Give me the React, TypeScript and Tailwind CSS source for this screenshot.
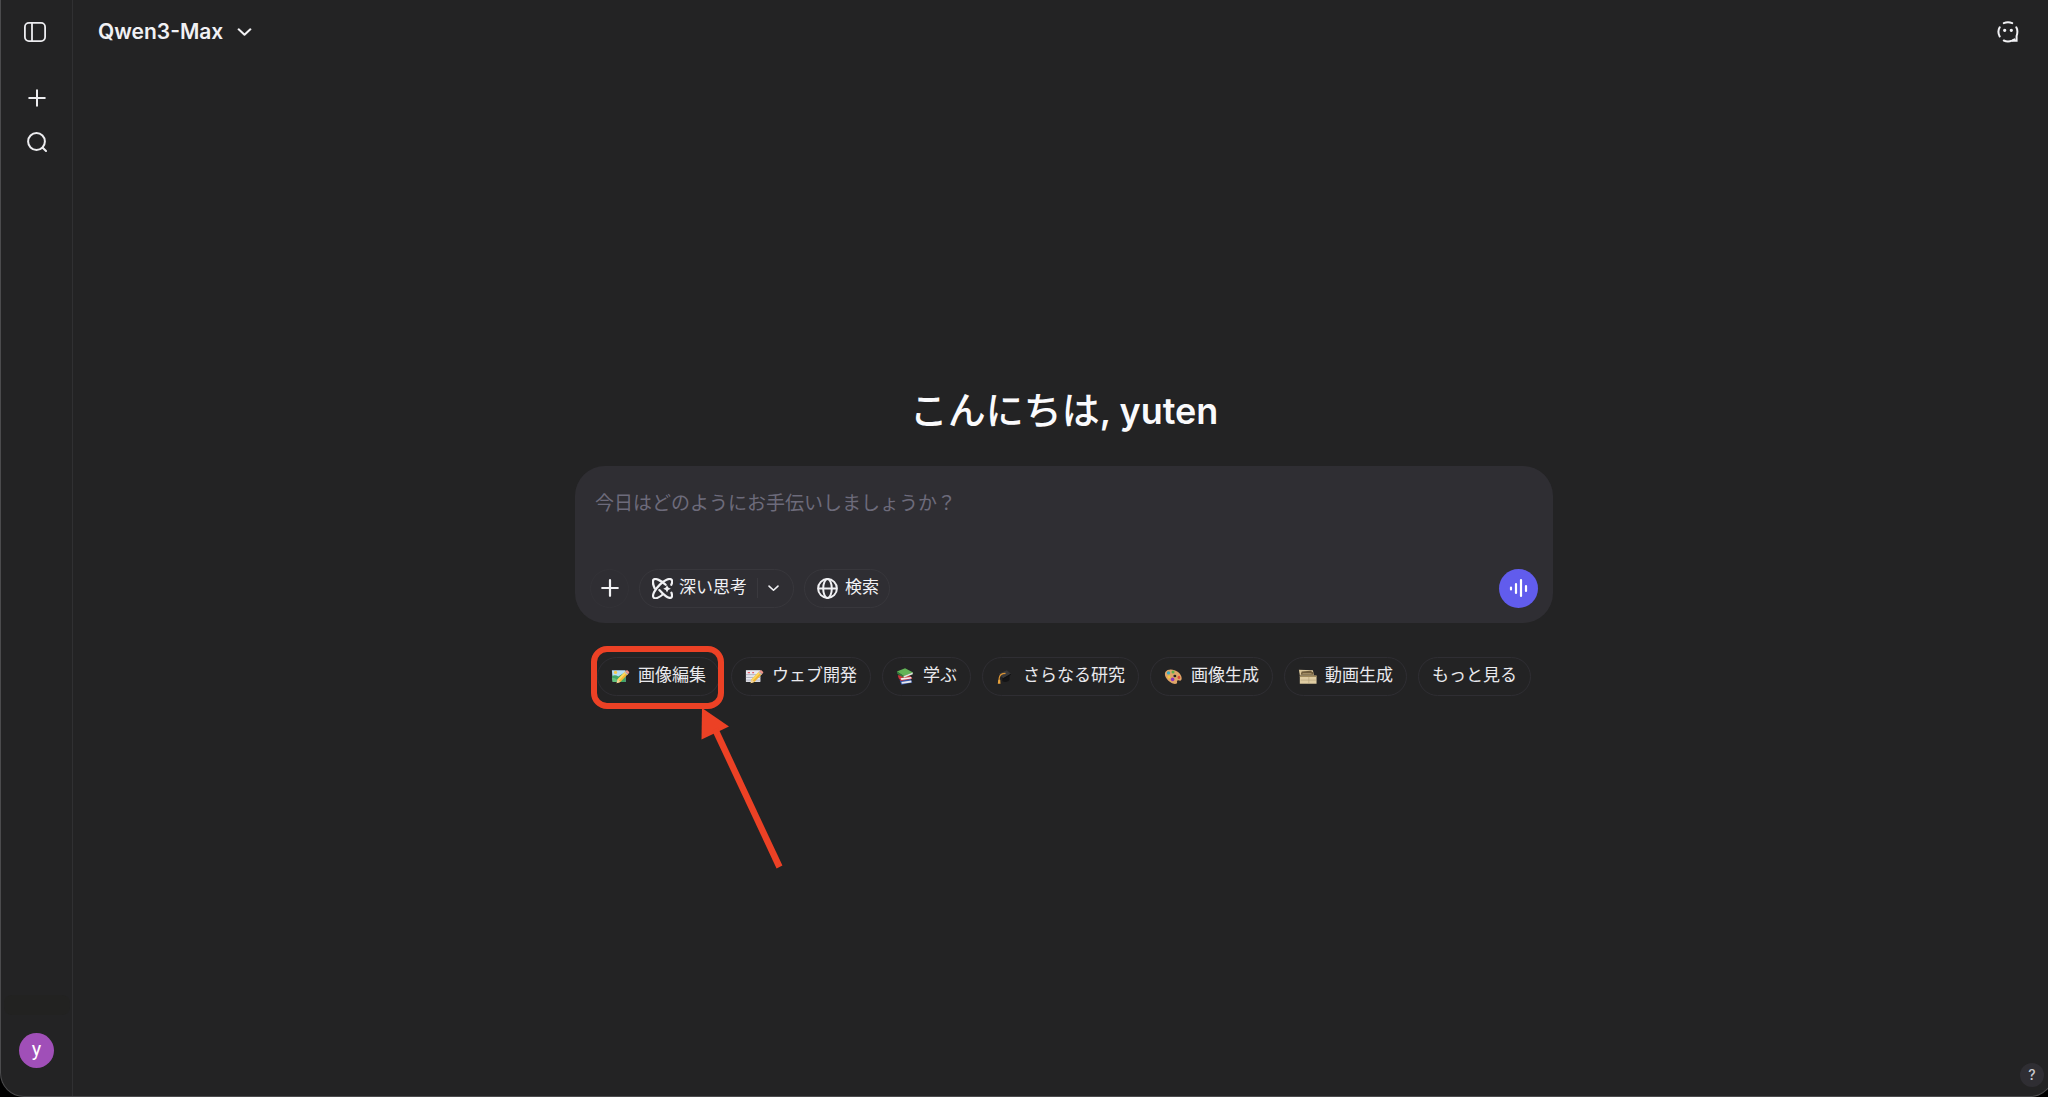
import type { ReactNode } from 'react'

function Pencil() {
    return (
        <g>
            <path d="M6.2 17.4 7.3 13 15.6 4.6l3 3-8.3 8.5z" fill="#f2b632" />
            <path d="M7.3 13 15.6 4.6l1.4 1.4L8.6 14.6z" fill="#fbd65e" />
            <path d="m15.6 4.6 1.2-1.2c.5-.5 1.2-.5 1.7 0L19.8 4.7c.5.5.5 1.2 0 1.7L18.6 7.6z" fill="#ee9489" />
            <path d="m14.9 5.3.9-.9 3 3-.9.9z" fill="#b9bcc4" />
            <path d="M6.2 17.4 7.3 13l3 3.1z" fill="#efd3a0" />
        </g>
    )
}

const chips: { label: string; icon?: ReactNode; marked?: boolean }[] = [
    {
        label: '画像編集',
        marked: true,
        icon: (
            <>
                <path d="M1 3h15v13H2z" fill="#b4ddf5" />
                <circle cx="5" cy="5.5" r="1.8" fill="#f5c84b" />
                <path d="M1 9.5c3-1.500 5-1 7 .5l8-5V16H2z" fill="#3fa565" />
                <path d="M1 12c3-1 5 0 7 4H2z" fill="#62c07c" />
                <Pencil />
            </>
        ),
    },
    {
        label: 'ウェブ開発',
        icon: (
            <>
                <path d="M1 3h16v13H1z" fill="#e9e9ef" />
                <path d="M3 5h2.500v1.500H3zM8 5h2v1.500H8z" fill="#e2606b" />
                <path d="M1 8h16M1 11h16M1 14h16" stroke="#a4a6b5" strokeWidth="0.9" />
                <Pencil />
            </>
        ),
    },
    {
        label: '学ぶ',
        icon: (
            <>
                <path d="m4 14 12-1.500 2 4L6 19z" fill="#3156a8" />
                <path d="m6 16 11-1.500v2L6.500 18z" fill="#e8e8ee" />
                <path d="m2 8.500 14 1 2 3L5.500 15 3 12z" fill="#c9353a" />
                <path d="m5 12 12-1.500v1.800L6 14z" fill="#f0eef0" />
                <path d="M1 4.500 10 1l9 4.500L8.500 9.500z" fill="#63b457" />
                <path d="m1 4.500 7.500 5v2L1.500 7z" fill="#317e3e" />
                <path d="m8.500 9.500 10-4V7.500l-10 4z" fill="#dfe9dd" />
            </>
        ),
    },
    {
        label: 'さらなる研究',
        icon: (
            <>
                <path d="M7 9v6c3 2 7 1 8-2V8z" fill="#141416" />
                <path d="m3 7 9-4 4.500 4L8 12z" fill="#38383a" />
                <path d="m8 12 8.500-5v1L8 13z" fill="#0f0f10" />
                <path d="M10.500 6.500C7 6.500 4 8 3.500 12v4" fill="none" stroke="#dc9434" strokeWidth="1.300" />
                <path d="M2.500 13.500h2.200l.3 4.500H2z" fill="#e8a23c" />
            </>
        ),
    },
    {
        label: '画像生成',
        icon: (
            <>
                <path
                    d="M1.500 5C4 1 11 1.500 15.500 5c3.500 2.700 5 7 3.500 9-1.200 1.500-3-.5-4.300.6-1 1 .6 2.400-.7 3.200C11 19.500 5.500 16 3 12.500 1 9.800.5 7 1.500 5z"
                    fill="#dfa568"
                />
                <circle cx="5" cy="6" r="1.900" fill="#3daac0" />
                <circle cx="10" cy="5" r="1.700" fill="#5db04b" />
                <circle cx="5.500" cy="10.500" r="1.600" fill="#f1c641" />
                <circle cx="9.500" cy="13.200" r="2" fill="#8d35bd" />
                <ellipse cx="16.500" cy="11" rx="1.500" ry="1.800" fill="#de4c3c" />
                <ellipse cx="12" cy="9.500" rx="1.600" ry="1.300" fill="#232324" />
            </>
        ),
    },
    {
        label: '動画生成',
        icon: (
            <>
                <path d="m1 2.500 15.500.5 1 5.500H2z" fill="#dcc89b" />
                <path d="m4 4.500 10-.8 3 1.800V8H3z" fill="#6f5c3c" />
                <path d="M5 6.800h10" stroke="#b9a478" strokeWidth="0.8" />
                <path d="M2 9h18.500v9H2z" fill="#dfcca2" />
                <path d="M2 9h18.500v1.500H2z" fill="#9c8659" />
                <path d="M3 14h17M12 10.500V18" stroke="#b5a27a" strokeWidth="0.7" />
            </>
        ),
    },
    { label: 'もっと見る' },
]

function ChevronDown({ className }: { className: string }) {
    return (
        <svg viewBox="0 0 16 10" className={className} fill="none" stroke="currentColor" strokeWidth="2.300" strokeLinecap="round" strokeLinejoin="round">
            <path d="m1.500 1.500 6.500 6 6.500-6" />
        </svg>
    )
}

function PlusIcon({ className, strokeWidth }: { className: string; strokeWidth: number }) {
    return (
        <svg viewBox="0 0 18 18" className={className} fill="none" stroke="currentColor" strokeWidth={strokeWidth} strokeLinecap="round">
            <path d="M9 1.200v15.600M1.200 9h15.600" />
        </svg>
    )
}

function Sidebar() {
    return (
        <aside className="flex w-[72px] shrink-0 flex-col items-center border-r border-[#303032] text-[#ededf0]">
            <button aria-label="サイドバー" className="mt-[22px] mr-[3px]">
                <svg viewBox="0 0 22 20" className="h-5 w-[22px]" fill="none" stroke="currentColor" strokeWidth="1.800">
                    <rect x="0.9" y="0.9" width="20.200" height="18.200" rx="4" />
                    <path d="M8 1v18" />
                </svg>
            </button>
            <button aria-label="新しいチャット" className="mt-[47px]">
                <PlusIcon className="size-[18px]" strokeWidth={2} />
            </button>
            <button aria-label="チャットを検索" className="mt-[25px]">
                <svg viewBox="0 0 20 20" className="size-5" fill="none" stroke="currentColor" strokeWidth="2" strokeLinecap="round">
                    <circle cx="9.500" cy="9.500" r="8.400" />
                    <path d="m15.700 15.700 3.300 3.300" />
                </svg>
            </button>
            <div className="mt-auto h-5 w-[66px] rounded-lg bg-[#222221]" />
            <button className="mt-[18px] mb-7 size-[35px] rounded-full bg-[#a04fb8] pb-1 font-['Roboto',sans-serif] text-xl leading-none text-white">
                y
            </button>
        </aside>
    )
}

function Header() {
    return (
        <header className="flex h-16 items-center justify-between pr-7 pl-[25px] text-[#f1f1f4]">
            <button className="flex items-center gap-[14px] text-[21px] font-semibold">
                Qwen3-Max
                <ChevronDown className="h-[9px] w-[15px]" />
            </button>
            <button aria-label="一時チャット">
                <svg viewBox="0 0 22 22" className="size-[22px]" fill="none" stroke="currentColor" strokeWidth="2" strokeLinecap="round">
                    <path d="M6.800 2.200c2.600-1.200 5.800-1.200 8.400 0" />
                    <path d="M2.700 6.300C1.100 9 1.100 12.500 2.700 15.400" />
                    <path d="M19.300 6.300c1.500 2.700 1.300 5.700.3 8.700V19.800h-4" />
                    <path d="M6.800 19.500c2.600 1.200 5.500 1.200 8.200.1l2.500-1.200" />
                    <circle cx="7.700" cy="9.300" r="1" fill="currentColor" strokeWidth="1.300" />
                    <circle cx="14.300" cy="9.300" r="1" fill="currentColor" strokeWidth="1.300" />
                </svg>
            </button>
        </header>
    )
}

function Composer() {
    return (
        <div className="flex w-full flex-col rounded-[30px] bg-[#2f2e33] px-[15px] pt-[23px] pb-[15px]">
            <textarea
                aria-label="メッセージ"
                rows={2}
                placeholder="今日はどのようにお手伝いしましょうか？"
                className="h-20 w-full resize-none bg-transparent px-[5px] text-[19px] leading-[30px] text-white outline-none placeholder:text-[#6d6b7b]"
            />
            <div className="flex h-[39px] items-stretch gap-[10px] text-[17px] text-[#f1f1f4]">
                <button aria-label="追加" className="flex w-[39px] items-center justify-center rounded-full border border-[#333237]">
                    <PlusIcon className="size-[18px]" strokeWidth={2.2} />
                </button>
                <div className="flex items-center rounded-full border border-[#38373c]">
                    <button className="flex items-center gap-[6px] pl-3">
                        <svg viewBox="0 0 20 20" className="size-[21px]" fill="none" stroke="currentColor" strokeWidth="2.100" strokeLinecap="round">
                            <path d="M18.400 6.500C19.300 4.500 19.300 2.200 18.500 1.500 16.600-.1 11.900 2 7.500 6.300 2.300 11.300-.1 16.700 1.500 18.500c1.500 1.500 5.200.2 9-3" />
                            <path d="M2.500 9.800C1 6.500.5 2.500 1.500 1.500 3.300-.1 8.600 2.200 13 6.500" />
                            <path d="M7 11.500c4.500 5 9.500 8.800 11.500 7 .8-.8.700-2.500 0-4.500" />
                            <path d="M14.300 6.800 15.500 9l2.400 1.200-2.400 1.200-1.200 2.400-1.200-2.400-2.400-1.200L13.100 9z" fill="currentColor" stroke="none" />
                        </svg>
                        深い思考
                    </button>
                    <span className="mx-[10px] h-5 w-px bg-[#3a393e]" />
                    <button aria-label="思考モード" className="pr-[14px]">
                        <ChevronDown className="h-[7px] w-[11px]" />
                    </button>
                </div>
                <button className="flex items-center gap-[7px] rounded-full border border-[#38373c] pr-[10px] pl-3">
                    <svg viewBox="0 0 21 21" className="size-[21px]" fill="none" stroke="currentColor" strokeWidth="2">
                        <circle cx="10.500" cy="10.500" r="9.400" />
                        <ellipse cx="10.500" cy="10.500" rx="4.300" ry="9.400" />
                        <path d="M1.100 10.500h18.800" />
                    </svg>
                    検索
                </button>
                <button aria-label="音声" className="ml-auto flex w-[39px] items-center justify-center rounded-full bg-[#615ced]">
                    <svg viewBox="0 0 20 20" className="size-5" fill="none" stroke="white" strokeWidth="2.200" strokeLinecap="round">
                        <path d="M2 9.500v2M7 6v9M12 2v16M17 8v5" />
                    </svg>
                </button>
            </div>
        </div>
    )
}

function Chips() {
    return (
        <div className="mt-[34px] flex flex-wrap justify-center gap-[11px]">
            {chips.map(({ label, icon, marked }) => (
                <div key={label} className="relative">
                    <button className="flex h-[39px] items-center gap-2 rounded-full border border-[#2f2e33] px-[13px] text-[17px] text-[#e9e9ed]">
                        {icon && (
                            <svg viewBox="0 0 21 20" className="size-[19px]">
                                {icon}
                            </svg>
                        )}
                        {label}
                    </button>
                    {/* Callout over the chip */}
                    {marked && (
                        <div className="pointer-events-none absolute -top-[11px] -right-1 -bottom-[13px] -left-[6px] rounded-2xl border-[6px] border-[#ec4125]">
                            <svg viewBox="0 0 84 164" className="absolute top-[55px] left-[104px] h-[164px] w-[84px]">
                                <path d="m1 1 27 18.500L.5 32.500z" fill="#ec4125" />
                                <path d="m14 22 64.500 138" stroke="#ec4125" strokeWidth="6.500" />
                            </svg>
                        </div>
                    )}
                </div>
            ))}
        </div>
    )
}

export default function App() {
    return (
        <div className="flex min-h-screen overflow-hidden bg-black font-['Inter','Noto_Sans_CJK_JP',sans-serif]">
            <div className="-mr-[6px] flex flex-1 rounded-b-3xl border border-t-0 border-[#4b4b4d] bg-[#232324] pr-[6px]">
                <Sidebar />
                <div className="relative flex min-w-0 flex-1 flex-col">
                    <Header />
                    <main className="flex flex-1 flex-col items-center justify-center pr-6 pb-[83px] pl-8">
                        <div className="w-full max-w-[978px]">
                            <h1 className="mb-[27px] text-center text-[38px] leading-[56px] font-medium text-[#fafafc]">
                                こんにちは<span className="text-[36px] font-semibold">, yuten</span>
                            </h1>
                            <Composer />
                            <Chips />
                        </div>
                    </main>
                    <button className="absolute right-[3px] bottom-[9px] size-6 rounded-full bg-[#2f2e33] text-sm font-medium text-[#c9c9cf]">?</button>
                </div>
            </div>
        </div>
    )
}
